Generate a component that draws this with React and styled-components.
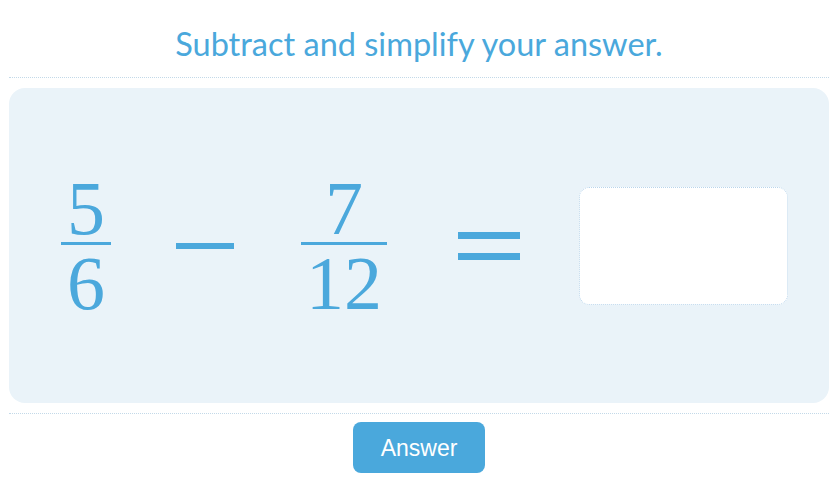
import styled, { createGlobalStyle } from 'styled-components';

const GlobalStyle = createGlobalStyle`
  html, body {
    margin: 0;
    padding: 0;
    background: #ffffff;
  }
`;

const Page = styled.div`
  width: 840px;
  padding: 0 11px 0 9px;
  box-sizing: border-box;
`;

const Title = styled.h1`
  margin: 0;
  padding: 25px 0 14px;
  height: 38px;
  line-height: 38px;
  font-family: Lato, 'Noto Sans', sans-serif;
  font-weight: 400;
  font-size: 32.5px;
  color: #4aa8dc;
  text-align: center;
`;

const Divider = styled.div`
  border-top: 1px dotted #c3d9e8;
  margin-top: ${(p) => p.$top || 0}px;
`;

const Panel = styled.div`
  margin-top: 10px;
  height: 315px;
  border-radius: 16px;
  background: #eaf3f9;
  display: flex;
  align-items: center;
  padding-left: 52px;
  box-sizing: border-box;
`;

const Fraction = styled.div`
  display: flex;
  flex-direction: column;
  align-items: stretch;
  font-family: 'Liberation Serif', 'Times New Roman', serif;
  font-size: 76px;
  color: #4ba8dc;
  text-align: center;
  margin-right: ${(p) => p.$gap}px;

  & > div:not(:nth-child(2)) {
    padding: 0 ${(p) => p.$pad}px;
  }
`;

const Numerator = styled.div`
  line-height: 68px;
  height: 68px;
`;

const Bar = styled.div`
  height: 3px;
  background: #4ba8dc;
`;

const Denominator = styled.div`
  line-height: 68px;
  height: 68px;
  margin-top: 4px;
`;

const Minus = styled.div`
  width: 58px;
  height: 6px;
  background: #4ba8dc;
  margin-right: 67px;
`;

const Equals = styled.div`
  width: 62px;
  display: flex;
  flex-direction: column;
  gap: 14px;
  margin-right: 59px;

  span {
    display: block;
    height: 7px;
    background: #4ba8dc;
  }
`;

const AnswerBox = styled.input`
  width: 209px;
  height: 118px;
  box-sizing: border-box;
  border: 1px dotted #b9d5ec;
  border-radius: 10px;
  background: #ffffff;
  outline: none;
  font-family: 'Liberation Serif', serif;
  font-size: 40px;
  color: #4ba8dc;
  text-align: center;
`;

const Footer = styled.div`
  display: flex;
  justify-content: center;
  padding-top: 8px;
`;

const AnswerButton = styled.button`
  width: 132px;
  height: 51px;
  border: none;
  border-radius: 8px;
  background: #4aa8dc;
  color: #ffffff;
  font-family: 'Liberation Sans', Arial, sans-serif;
  font-size: 23px;
  padding-top: 3px;
  cursor: pointer;
`;

const App = () => {
  return (
    <>
      <GlobalStyle />
      <Page>
        <Title>Subtract and simplify your answer.</Title>
        <Divider />
        <Panel>
          <Fraction $gap={65} $pad={6}>
            <Numerator>5</Numerator>
            <Bar />
            <Denominator>6</Denominator>
          </Fraction>
          <Minus />
          <Fraction $gap={71} $pad={5}>
            <Numerator>7</Numerator>
            <Bar />
            <Denominator>12</Denominator>
          </Fraction>
          <Equals>
            <span />
            <span />
          </Equals>
          <AnswerBox type="text" />
        </Panel>
        <Divider $top={10} />
        <Footer>
          <AnswerButton>Answer</AnswerButton>
        </Footer>
      </Page>
    </>
  );
};

export default App;
